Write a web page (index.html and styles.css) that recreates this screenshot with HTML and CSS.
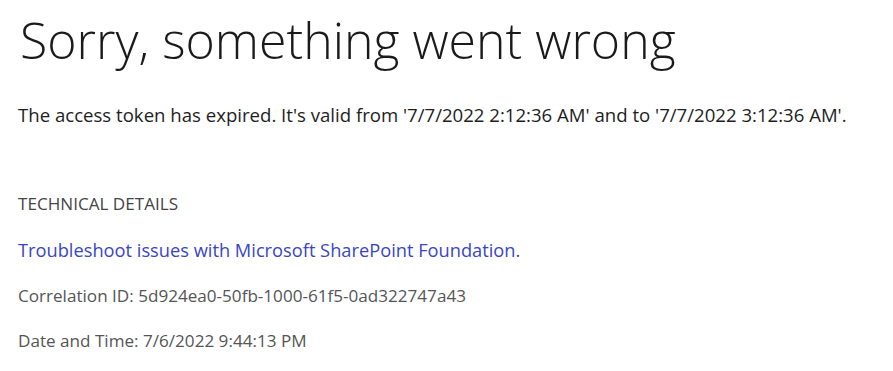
FILE: index.html
```html
<!DOCTYPE html>
<html>
<head>
<meta charset="utf-8">
<link rel="stylesheet" href="styles.css">
</head>
<body>
<main class="page">
  <h1 class="title">Sorry, something went wrong</h1>
  <p class="message">The access token has expired. It's valid from '7/7/2022 2:12:36 AM' and to '7/7/2022 3:12:36 AM'.</p>
  <section class="details">
    <div class="details-head">TECHNICAL DETAILS</div>
    <a class="link" href="#">Troubleshoot issues with Microsoft SharePoint Foundation.</a>
    <div class="meta meta-id">Correlation ID: 5d924ea0-50fb-1000-61f5-0ad322747a43</div>
    <div class="meta meta-date">Date and Time: 7/6/2022 9:44:13 PM</div>
  </section>
</main>
</body>
</html>
```

FILE: styles.css
```css
html, body {
  margin: 0;
  padding: 0;
  background: #ffffff;
}
body {
  font-family: "Open Sans", "Noto Sans", "Liberation Sans", sans-serif;
}
.page {
  padding: 8px 0 0 18px;
}
.title {
  margin: 0;
  font-weight: 300;
  font-size: 50px;
  line-height: 64px;
  color: #1a1a1a;
  padding-left: 2px;
}
.message {
  margin: 31px 0 0 0;
  font-size: 18.6px;
  line-height: 24px;
  color: #1e1e1e;
}
.details {
  margin-top: 65px;
  display: flex;
  flex-direction: column;
  align-items: flex-start;
}
.details-head {
  font-size: 17.1px;
  line-height: 24px;
  color: #444;
}
.link {
  margin-top: 22px;
  font-size: 18.25px;
  line-height: 24px;
  color: #3a45c6;
  text-decoration: none;
}
.meta {
  font-size: 17.1px;
  line-height: 24px;
  color: #555;
}
.meta-id {
  margin-top: 22px;
}
.meta-date {
  margin-top: 21px;
}
```
